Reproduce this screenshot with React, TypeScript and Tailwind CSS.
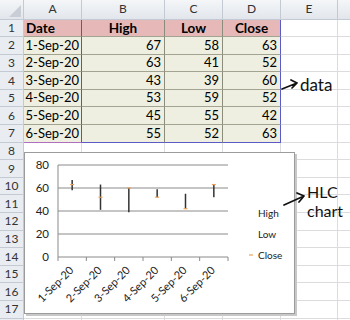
import React from "react";

const cols = [
  { key: "A", w: "w-[58px]" },
  { key: "B", w: "w-[83px]" },
  { key: "C", w: "w-[58px]" },
  { key: "D", w: "w-[58px]" },
  { key: "E", w: "w-[57px]" },
];

const data: [string, number, number, number][] = [
  ["1-Sep-20", 67, 58, 63],
  ["2-Sep-20", 63, 41, 52],
  ["3-Sep-20", 43, 39, 60],
  ["4-Sep-20", 53, 59, 52],
  ["5-Sep-20", 45, 55, 42],
  ["6-Sep-20", 55, 52, 63],
];

function Cell({
  w,
  className,
  children,
}: {
  w: string;
  className: string;
  children?: React.ReactNode;
}) {
  return <div className={`${w} h-full shrink-0 flex items-center ${className}`}>{children}</div>;
}

function Row({ r }: { r: number }) {
  const inData = r >= 1 && r <= 7;
  const last = r === 7;
  const d = r >= 2 && r <= 7 ? data[r - 2] : null;
  const fill = r === 1 ? "bg-[#e6b9b8]" : "bg-[#eeefe0]";
  const hb = last ? "border-b-[#5a5ac8]" : "border-b-[#a3a392]";
  return (
    <div className="flex h-[17.6px]">
      <div className="w-[24px] h-full shrink-0 flex items-center justify-center text-[12px] text-[#333] bg-[#e9edf2] border-r border-b border-[#c3cad3]">
        {r < 18 ? r : ""}
      </div>
      {inData ? (
        <>
          <Cell
            w="w-[58px]"
            className={`${fill} border-r border-b border-r-[#5b50c8] ${last ? "border-b-[#b06ec0]" : "border-b-[#a3a392]"} ${r === 1 ? "justify-start pl-[2px] font-bold text-[13.5px]" : "justify-end pr-[2px]"}`}
          >
            {r === 1 ? "Date" : d![0]}
          </Cell>
          <Cell w="w-[83px]" className={`${fill} border-r border-b border-r-[#8c8c7c] ${hb} ${r === 1 ? "justify-center font-bold text-[13.5px]" : "justify-end pr-[3px]"}`}>
            {r === 1 ? "High" : d![1]}
          </Cell>
          <Cell w="w-[58px]" className={`${fill} border-r border-b border-r-[#8c8c7c] ${hb} ${r === 1 ? "justify-center font-bold text-[13.5px]" : "justify-end pr-[3px]"}`}>
            {r === 1 ? "Low" : d![2]}
          </Cell>
          <Cell w="w-[58px]" className={`${fill} border-r border-b border-r-[#5a5ac8] ${hb} ${r === 1 ? "justify-center font-bold text-[13.5px]" : "justify-end pr-[3px]"}`}>
            {r === 1 ? "Close" : d![3]}
          </Cell>
        </>
      ) : (
        <>
          <Cell w="w-[58px]" className="border-r border-b border-[#dadcdd]" />
          <Cell w="w-[83px]" className="border-r border-b border-[#dadcdd]" />
          <Cell w="w-[58px]" className="border-r border-b border-[#dadcdd]" />
          <Cell w="w-[58px]" className="border-r border-b border-[#dadcdd]" />
        </>
      )}
      <Cell w="w-[57px]" className="border-r border-b border-[#dadcdd]" />
      <div className="flex-1 h-full border-b border-[#dadcdd]" />
    </div>
  );
}

function Chart() {
  const x0 = 33;
  const x1 = 203;
  const yv = (v: number) => 104 - v * 1.15;
  const step = (x1 - x0) / 6;
  const grid = [0, 20, 40, 60, 80];
  return (
    <div className="absolute left-[24px] top-[152px] w-[271px] h-[162px] bg-white border border-[#9c9c9c] shadow-[2px_2px_0_#c8c8c8]">
      <svg width="271" height="162" className="absolute left-0 top-0" style={{ fontFamily: "Lato, sans-serif" }}>
        {grid.map((g) => (
          <g key={g}>
            <line x1={x0} x2={x1} y1={yv(g)} y2={yv(g)} stroke="#8a8a8a" strokeWidth="1" />
            <text x={24} y={yv(g) + 4} textAnchor="end" fontSize="11.5" fill="#222">
              {g}
            </text>
          </g>
        ))}
        <line x1={x0} x2={x0} y1={yv(80)} y2={yv(0)} stroke="#8a8a8a" strokeWidth="1" />
        {Array.from({ length: 7 }).map((_, i) => (
          <line key={i} x1={x0 + i * step} x2={x0 + i * step} y1={104} y2={108} stroke="#8a8a8a" strokeWidth="1" />
        ))}
        {data.map((d, i) => {
          const cx = x0 + (i + 0.5) * step;
          const hi = Math.max(d[1], d[2], d[3]);
          const lo = Math.min(d[1], d[2], d[3]);
          const ax = cx + 2;
          const ay = 118;
          return (
            <g key={i}>
              <line x1={cx} x2={cx} y1={yv(hi)} y2={yv(lo)} stroke="#333" strokeWidth="1.5" />
              <line x1={cx - 2} x2={cx + 2} y1={yv(d[3])} y2={yv(d[3])} stroke="#e9a35a" strokeWidth="1.2" />
              <text
                x={ax}
                y={ay}
                textAnchor="end"
                fontSize="11"
                fill="#1a1a1a"
                transform={`rotate(-45 ${ax} ${ay})`}
              >
                {d[0]}
              </text>
            </g>
          );
        })}
        <text x={233} y={64} fontSize="10" fill="#222">High</text>
        <text x={233} y={85} fontSize="10" fill="#222">Low</text>
        <line x1={224} x2={228} y1={102} y2={102} stroke="#e9a35a" strokeWidth="1.2" />
        <text x={233} y={106} fontSize="10" fill="#222">Close</text>
      </svg>
    </div>
  );
}

export default function App() {
  return (
    <div
      className="relative w-[350px] h-[320px] overflow-hidden bg-white text-[13px] text-black"
      style={{ fontFamily: "Lato, 'Open Sans', sans-serif" }}
    >
      <div className="flex h-[19.5px]">
        <div className="w-[24px] h-full shrink-0 relative bg-linear-to-b from-[#f4f6f8] to-[#e2e6ec] border-r border-b border-[#c3cad3]">
          <svg width="12" height="12" className="absolute right-[2px] bottom-[2px]">
            <polygon points="12,0 12,12 0,12" fill="#c9ced6" />
          </svg>
        </div>
        {cols.map((c) => (
          <div
            key={c.key}
            className={`${c.w} h-full shrink-0 flex items-center justify-center text-[12px] text-[#333] bg-linear-to-b from-[#f4f6f8] to-[#e2e6ec] border-r border-b border-[#c3cad3]`}
          >
            {c.key}
          </div>
        ))}
        <div className="flex-1 h-full bg-linear-to-b from-[#f4f6f8] to-[#e2e6ec] border-b border-[#c3cad3]" />
      </div>
      {Array.from({ length: 18 }).map((_, i) => (
        <Row key={i} r={i + 1} />
      ))}

      <Chart />

      <div className="absolute left-[281px] top-[76px] flex items-center gap-[1px]">
        <svg width="18" height="14">
          <path d="M1 11 L16 5 M10 2 L16 5 L11 10" stroke="#111" strokeWidth="1.7" fill="none" strokeLinecap="round" strokeLinejoin="round" />
        </svg>
        <span className="text-[17px] leading-none text-[#111]">data</span>
      </div>

      <div className="absolute left-[283px] top-[182px] flex items-start">
        <svg width="24" height="22" className="mt-[6px]">
          <path d="M1 17 L21 8 M14 5 L21 8 L16 14" stroke="#111" strokeWidth="1.7" fill="none" strokeLinecap="round" strokeLinejoin="round" />
        </svg>
        <div className="text-[16px] leading-[19px] text-[#111]">
          <div>HLC</div>
          <div>chart</div>
        </div>
      </div>
    </div>
  );
}
